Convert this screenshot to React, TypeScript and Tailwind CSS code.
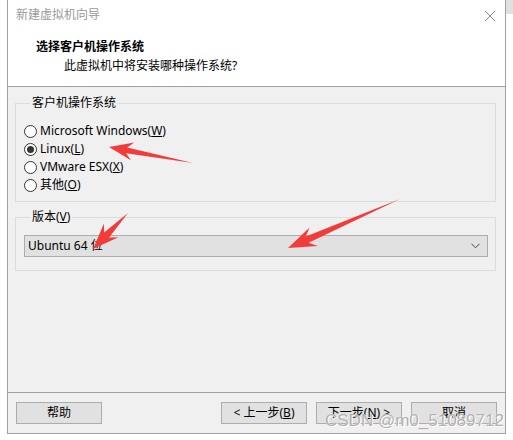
import React from 'react';

const font = { fontFamily: '"Noto Sans", "Noto Sans CJK SC", sans-serif' };

type Pt = [number, number];

// builds a hand-drawn style arrow: pointed tail, widening shaft, barbed head
function arrowPoints(tail: Pt, tip: Pt, headLen: number, headW: number, shaftW: number) {
  const dx = tip[0] - tail[0];
  const dy = tip[1] - tail[1];
  const len = Math.hypot(dx, dy);
  const ux = dx / len;
  const uy = dy / len;
  const nx = -uy;
  const ny = ux;
  const bx = tip[0] - ux * headLen;
  const by = tip[1] - uy * headLen;
  const nb = headLen * 0.75;
  const nx0 = tip[0] - ux * nb;
  const ny0 = tip[1] - uy * nb;
  const pts: Pt[] = [
    tail,
    [nx0 + nx * shaftW, ny0 + ny * shaftW],
    [bx + nx * headW, by + ny * headW],
    tip,
    [bx - nx * headW, by - ny * headW],
    [nx0 - nx * shaftW, ny0 - ny * shaftW],
  ];
  return pts.map((p) => `${p[0].toFixed(1)},${p[1].toFixed(1)}`).join(' ');
}

function Radio({ checked, children }: { checked?: boolean; children: React.ReactNode }) {
  return (
    <div className="flex items-center h-[18px] gap-[3px]">
      <span className="w-[13px] h-[13px] rounded-full border border-[#333] bg-white flex items-center justify-center">
        {checked && <span className="w-[7px] h-[7px] rounded-full bg-[#333]" />}
      </span>
      <span className="text-[12px] text-black leading-none">{children}</span>
    </div>
  );
}

function Btn({ children }: { children: React.ReactNode }) {
  return (
    <button className="w-[86px] h-[22px] border border-[#adadad] bg-[#e1e1e1] text-[12px] text-black flex items-center justify-center">
      {children}
    </button>
  );
}

export default function App() {
  return (
    <div className="relative w-[513px] h-[440px] bg-white flex overflow-hidden" style={font}>
      <div className="w-[7px]" />
      <div className="w-[499px] h-[434px] border-l border-r border-b border-[#a0a0a0] flex flex-col">
        {/* header */}
        <div className="h-[87px] bg-white border-b border-[#a0a0a0] flex flex-col">
          <div className="h-[30px] flex items-center justify-between pl-[8px] pr-[9px]">
            <span className="text-[12px] text-[#999]">新建虚拟机向导</span>
            <svg width="12" height="12" viewBox="0 0 12 12" className="mt-[1px]">
              <path d="M1 1 L11 11 M11 1 L1 11" stroke="#888" strokeWidth="1" fill="none" />
            </svg>
          </div>
          <div className="pl-[28px] pt-[9px] text-[12px] font-bold text-black leading-[16px]">选择客户机操作系统</div>
          <div className="pl-[56px] pt-[3px] text-[12px] text-black leading-[16px]">此虚拟机中将安装哪种操作系统?</div>
        </div>

        {/* body */}
        <div className="flex-1 bg-[#f0f0f0] pt-[8px] pl-[7px]">
          <fieldset className="w-[481px] border border-[#dcdcdc] pl-[8px] pb-[7px]">
            <legend className="ml-[6px] px-[2px] text-[12px] text-black leading-[16px]">客户机操作系统</legend>
            <div className="pt-[11px] flex flex-col">
              <Radio>Microsoft Windows(<u>W</u>)</Radio>
              <Radio checked>Linux(<u>L</u>)</Radio>
              <Radio>VMware ESX(<u>X</u>)</Radio>
              <Radio>其他(<u>O</u>)</Radio>
            </div>
          </fieldset>

          <fieldset className="mt-[7px] w-[481px] border border-[#dcdcdc] pl-[8px] pb-[13px]">
            <legend className="ml-[6px] px-[2px] text-[12px] text-black leading-[16px]">版本(<u>V</u>)</legend>
            <div className="mt-[10px] w-[464px] h-[22px] border border-[#adadad] bg-[#e1e1e1] flex items-center justify-between pl-[3px] pr-[7px]">
              <span className="text-[12px] text-black">Ubuntu 64 位</span>
              <svg width="9" height="6" viewBox="0 0 9 6">
                <path d="M0.5 0.8 L4.5 4.8 L8.5 0.8" stroke="#444" strokeWidth="1" fill="none" />
              </svg>
            </div>
          </fieldset>
        </div>

        {/* footer */}
        <div className="h-[41px] bg-[#f0f0f0] border-t border-[#a0a0a0] flex items-start pt-[9px] pl-[8px] pr-[8px]">
          <Btn>帮助</Btn>
          <div className="flex-1" />
          <div className="flex gap-[9px]">
            <Btn>&lt; 上一步(<u>B</u>)</Btn>
            <Btn>下一步(<u>N</u>) &gt;</Btn>
            <Btn>取消</Btn>
          </div>
        </div>
      </div>
      <div className="flex-1 flex flex-col">
        <div className="h-[14px] bg-[#e0e0e0]" />
      </div>

      {/* annotations */}
      <svg className="absolute inset-0 pointer-events-none" width="513" height="440">
        <polygon points={arrowPoints([193, 163], [109, 147], 24, 9, 3)} fill="#f23c3c" />
        <polygon points={arrowPoints([128, 213], [93, 249], 26, 10, 3.5)} fill="#f23c3c" />
        <polygon points={arrowPoints([400, 199], [288, 248], 28, 10, 3.5)} fill="#f23c3c" />
      </svg>
      <div
        className="absolute left-[325px] top-[412px] whitespace-nowrap text-[17px] leading-none text-[#b0b0b0] pointer-events-none"
        style={{ fontFamily: '"Liberation Sans", Arial, sans-serif', textShadow: '0 0 1px #fff, 1px 1px 0 #fff' }}
      >
        CSDN @m0_51089712
      </div>
    </div>
  );
}
